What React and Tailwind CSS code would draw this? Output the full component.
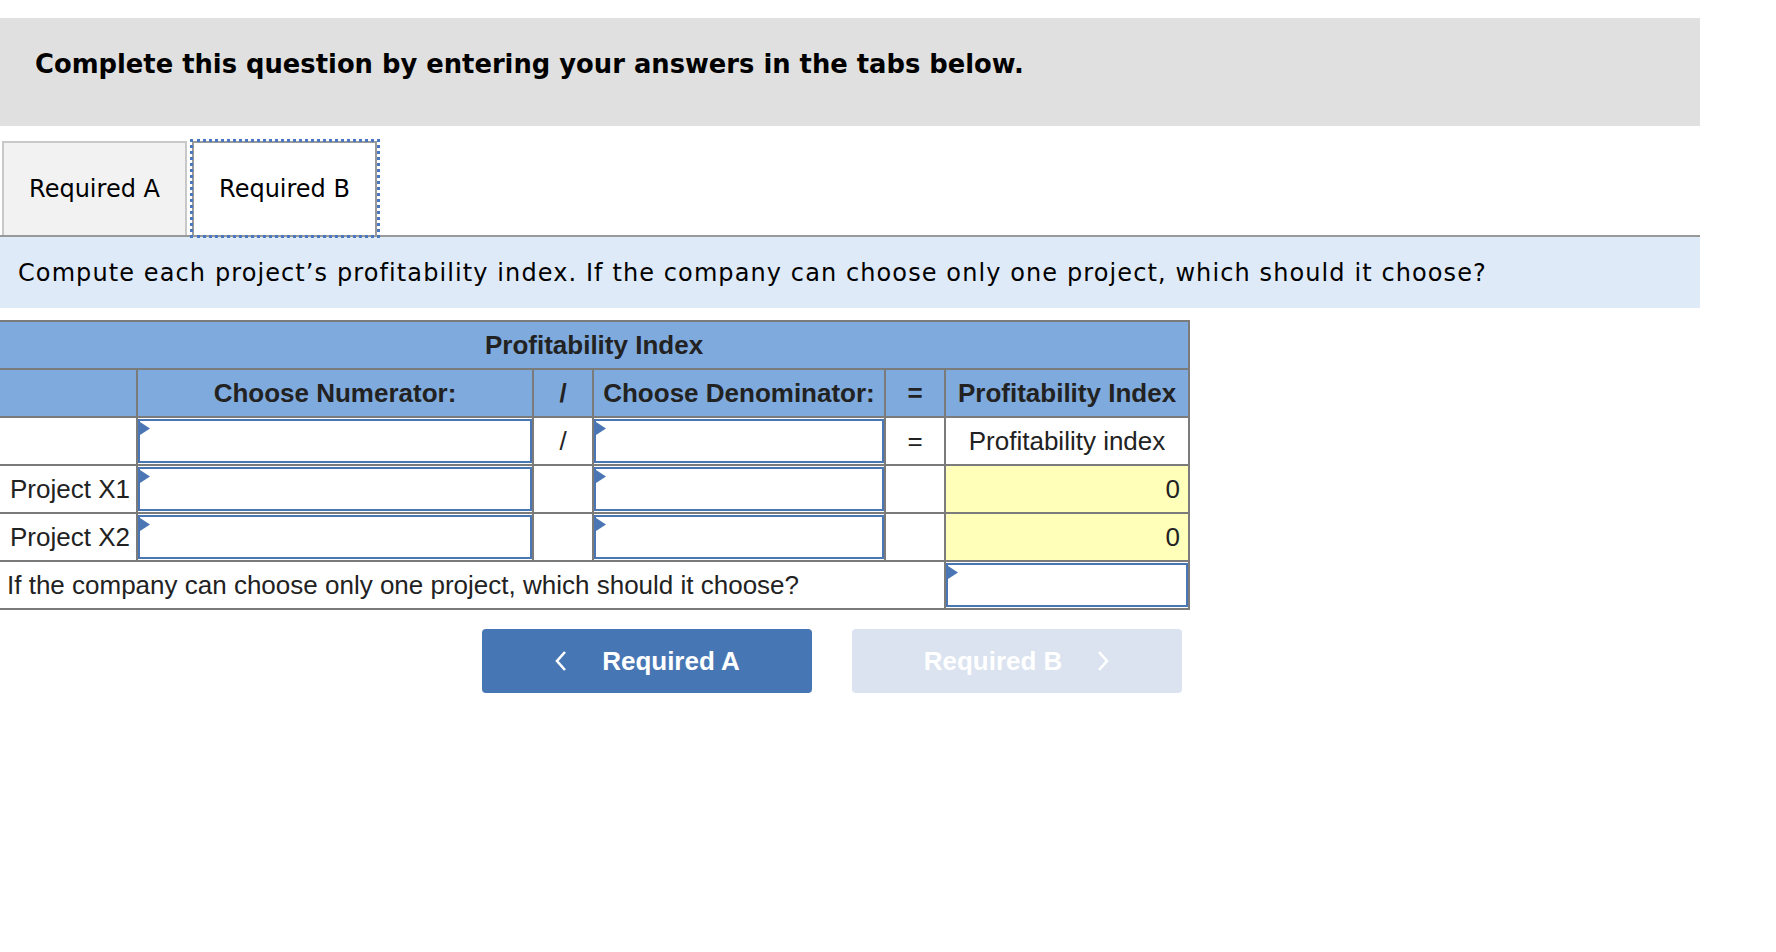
import React from "react";

const Marker = () => (
  <svg className="absolute left-0 top-[1px]" width="10" height="13" viewBox="0 0 10 13">
    <polygon points="0,0 10,6.5 0,13" fill="#4a76b4" />
  </svg>
);

const InputBox = () => (
  <div className="relative h-[44px] w-full border-2 border-[#4a76b4] bg-white">
    <Marker />
  </div>
);

const cell = "border-2 border-[#7b7b7b] p-0 h-[48px]";

export default function App() {
  return (
    <div className="min-h-[952px] w-[1776px] bg-white text-black">
      <div className="h-[18px]" />
      <div className="h-[108px] w-[1700px] bg-[#e0e0e0] pl-[35px] pt-[32px] font-['DejaVu_Sans',Verdana,sans-serif] text-[25.8px] font-bold leading-[28px]">
        Complete this question by entering your answers in the tabs below.
      </div>

      <div className="flex h-[111px] w-[1700px] items-end border-b-2 border-[#999999] pl-[2px] font-['DejaVu_Sans',Verdana,sans-serif] text-[24px]">
        <div className="flex h-[94px] w-[185px] items-center justify-center border-2 border-b-0 border-[#c8c8c8] bg-[#f2f2f2]">
          Required A
        </div>
        <div className="relative ml-[5px] flex h-[94px] w-[185px] items-center justify-center border-2 border-b-0 border-[#9a9a9a] bg-white">
          <div className="pointer-events-none absolute -left-[4px] -right-[5px] -top-[4px] -bottom-[3px] border-[3px] border-dotted border-[#4a78c0]" />
          Required B
        </div>
      </div>

      <div className="flex h-[71px] w-[1700px] items-center bg-[#deeaf7] pl-[18px] font-['DejaVu_Sans',Verdana,sans-serif] text-[24px] tracking-[1.1px]">
        Compute each project’s profitability index. If the company can choose only one project, which should it choose?
      </div>

      <div className="h-[12px]" />

      <table className="w-[1189px] table-fixed border-collapse font-['Liberation_Sans',Arial,sans-serif] text-[26px] leading-none text-[#222222]">
        <colgroup>
          <col className="w-[137px]" />
          <col className="w-[396px]" />
          <col className="w-[60px]" />
          <col className="w-[292px]" />
          <col className="w-[60px]" />
          <col className="w-[244px]" />
        </colgroup>
        <tbody>
          <tr>
            <td colSpan={6} className={`${cell} border-l-0 bg-[#7faadd] text-center font-bold`}>
              Profitability Index
            </td>
          </tr>
          <tr className="bg-[#7faadd] font-bold">
            <td className={`${cell} border-l-0`} />
            <td className={`${cell} text-center`}>Choose Numerator:</td>
            <td className={`${cell} text-center`}>/</td>
            <td className={`${cell} text-center whitespace-nowrap`}>Choose Denominator:</td>
            <td className={`${cell} text-center`}>=</td>
            <td className={`${cell} text-center whitespace-nowrap`}>Profitability Index</td>
          </tr>
          <tr>
            <td className={`${cell} border-l-0`} />
            <td className={cell}><InputBox /></td>
            <td className={`${cell} text-center`}>/</td>
            <td className={cell}><InputBox /></td>
            <td className={`${cell} text-center`}>=</td>
            <td className={`${cell} text-center whitespace-nowrap`}>Profitability index</td>
          </tr>
          {["Project X1", "Project X2"].map((p) => (
            <tr key={p}>
              <td className={`${cell} border-l-0 pl-[10px] whitespace-nowrap`}>{p}</td>
              <td className={cell}><InputBox /></td>
              <td className={cell} />
              <td className={cell}><InputBox /></td>
              <td className={cell} />
              <td className={`${cell} bg-[#ffffb9] pr-[8px] text-right`}>0</td>
            </tr>
          ))}
          <tr>
            <td colSpan={5} className={`${cell} border-l-0 pl-[7px] whitespace-nowrap`}>
              If the company can choose only one project, which should it choose?
            </td>
            <td className={cell}><InputBox /></td>
          </tr>
        </tbody>
      </table>

      <div className="ml-[482px] mt-[19px] flex gap-[40px] font-['Liberation_Sans',Arial,sans-serif] text-[26px] font-bold text-white">
        <button className="flex h-[64px] w-[330px] items-center justify-center gap-[34px] rounded-[4px] bg-[#4776b4]">
          <svg width="14" height="22" viewBox="0 0 14 22">
            <polyline points="11,2 3,11 11,20" fill="none" stroke="white" strokeWidth="2.6" />
          </svg>
          <span>Required A</span>
        </button>
        <button className="flex h-[64px] w-[330px] items-center justify-center gap-[34px] rounded-[4px] bg-[#dae3ef]">
          <span>Required B</span>
          <svg width="14" height="22" viewBox="0 0 14 22">
            <polyline points="3,2 11,11 3,20" fill="none" stroke="white" strokeWidth="2.6" />
          </svg>
        </button>
      </div>
    </div>
  );
}
